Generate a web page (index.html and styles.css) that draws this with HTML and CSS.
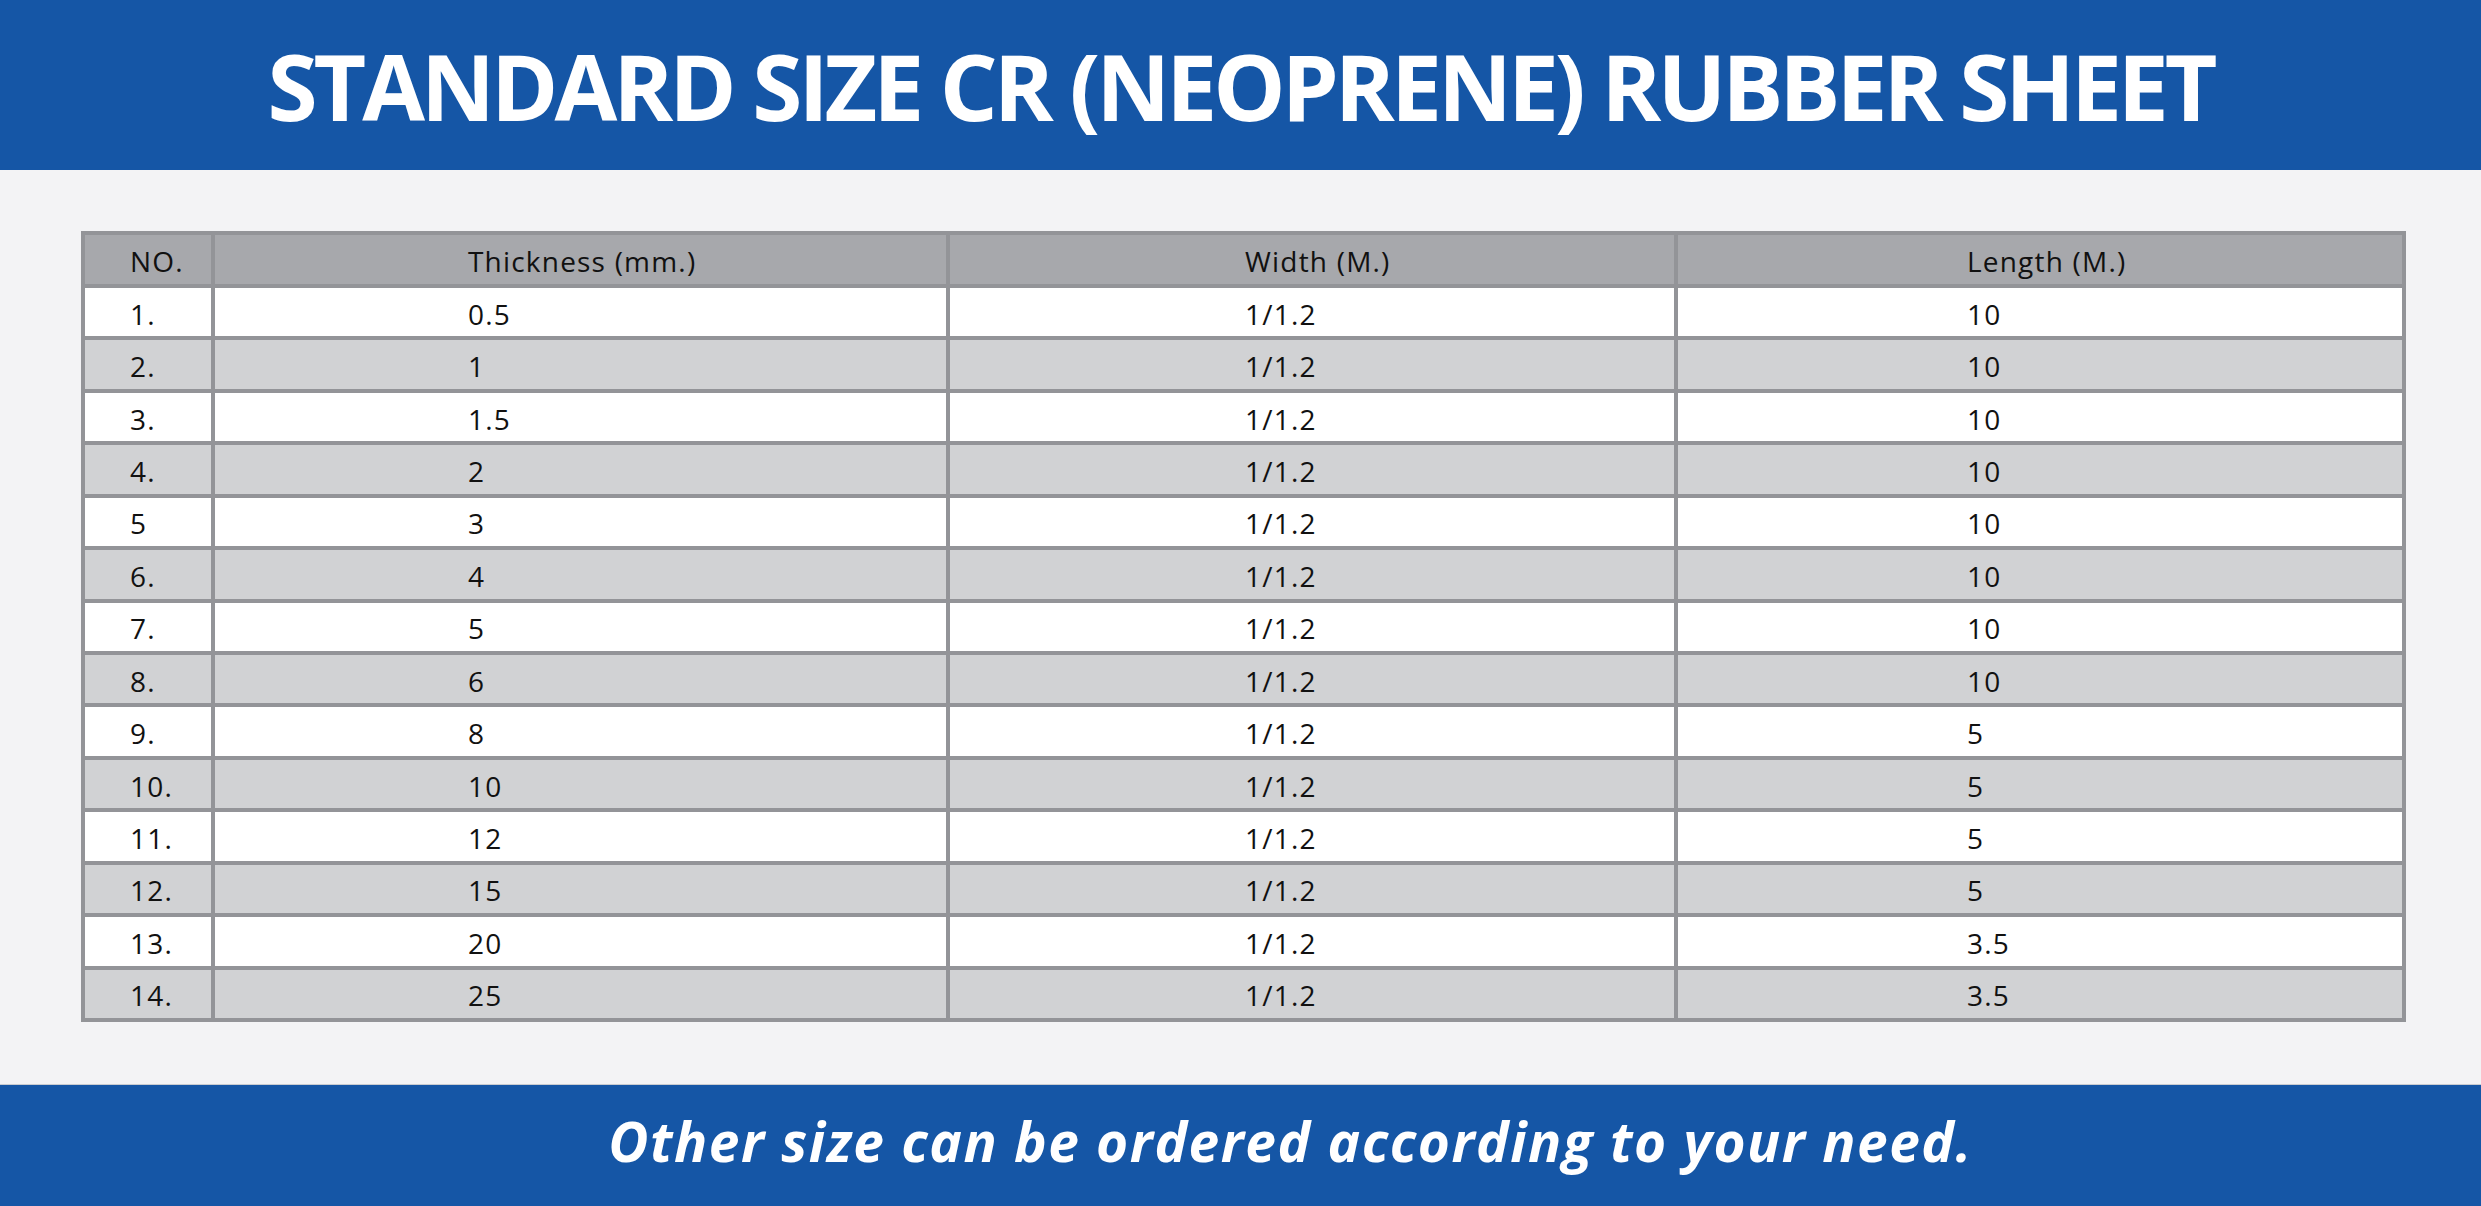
FILE: index.html
```html
<!DOCTYPE html>
<html lang="en">
<head>
<meta charset="utf-8">
<title>Standard Size CR (Neoprene) Rubber Sheet</title>
<link rel="stylesheet" href="styles.css">
</head>
<body>
<header class="banner">
  <h1 class="title">STANDARD SIZE CR (NEOPRENE) RUBBER SHEET</h1>
</header>
<main class="content">
  <div class="sheet" role="table">
    <div class="cell head c1" role="columnheader">NO.</div>
    <div class="cell head c2" role="columnheader">Thickness (mm.)</div>
    <div class="cell head c3" role="columnheader">Width (M.)</div>
    <div class="cell head c4" role="columnheader">Length (M.)</div>

    <div class="cell odd c1">1.</div><div class="cell odd c2">0.5</div><div class="cell odd c3">1/1.2</div><div class="cell odd c4">10</div>
    <div class="cell even c1">2.</div><div class="cell even c2">1</div><div class="cell even c3">1/1.2</div><div class="cell even c4">10</div>
    <div class="cell odd c1">3.</div><div class="cell odd c2">1.5</div><div class="cell odd c3">1/1.2</div><div class="cell odd c4">10</div>
    <div class="cell even c1">4.</div><div class="cell even c2">2</div><div class="cell even c3">1/1.2</div><div class="cell even c4">10</div>
    <div class="cell odd c1">5</div><div class="cell odd c2">3</div><div class="cell odd c3">1/1.2</div><div class="cell odd c4">10</div>
    <div class="cell even c1">6.</div><div class="cell even c2">4</div><div class="cell even c3">1/1.2</div><div class="cell even c4">10</div>
    <div class="cell odd c1">7.</div><div class="cell odd c2">5</div><div class="cell odd c3">1/1.2</div><div class="cell odd c4">10</div>
    <div class="cell even c1">8.</div><div class="cell even c2">6</div><div class="cell even c3">1/1.2</div><div class="cell even c4">10</div>
    <div class="cell odd c1">9.</div><div class="cell odd c2">8</div><div class="cell odd c3">1/1.2</div><div class="cell odd c4">5</div>
    <div class="cell even c1">10.</div><div class="cell even c2">10</div><div class="cell even c3">1/1.2</div><div class="cell even c4">5</div>
    <div class="cell odd c1">11.</div><div class="cell odd c2">12</div><div class="cell odd c3">1/1.2</div><div class="cell odd c4">5</div>
    <div class="cell even c1">12.</div><div class="cell even c2">15</div><div class="cell even c3">1/1.2</div><div class="cell even c4">5</div>
    <div class="cell odd c1">13.</div><div class="cell odd c2">20</div><div class="cell odd c3">1/1.2</div><div class="cell odd c4">3.5</div>
    <div class="cell even c1">14.</div><div class="cell even c2">25</div><div class="cell even c3">1/1.2</div><div class="cell even c4">3.5</div>
  </div>
</main>
<footer class="footer">
  <p class="note">Other size can be ordered according to your need.</p>
</footer>
</body>
</html>
```
FILE: styles.css
```css
html, body {
  margin: 0;
  padding: 0;
}
body {
  width: 2481px;
  height: 1206px;
  overflow: hidden;
  background: #f3f3f5;
  display: flex;
  flex-direction: column;
}
.banner {
  height: 170px;
  background: #1556a6;
  display: flex;
  align-items: center;
  justify-content: center;
}
.title {
  margin: 0;
  padding-top: 2px;
  font-family: "Open Sans", "Liberation Sans", sans-serif;
  font-weight: 700;
  font-size: 91px;
  line-height: 1;
  letter-spacing: -4px;
  color: #ffffff;
}
.content {
  height: 915px;
  padding: 61px 75px 0 81px;
  box-sizing: border-box;
  border-bottom: 1px solid #c9cbd0;
}
.sheet {
  display: grid;
  grid-template-columns: 126px 731px 724px 724px;
  grid-template-rows: 49px repeat(14, 1fr);
  gap: 4px;
  padding: 4px;
  height: 791px;
  box-sizing: border-box;
  background: #939498;
}
.cell {
  display: flex;
  align-items: center;
  padding-top: 3px;
  box-sizing: border-box;
  font-family: "Open Sans", "Liberation Sans", sans-serif;
  font-size: 28px;
  letter-spacing: 1.2px;
  color: #111111;
}
.head { background: #a7a8ac; }
.odd { background: #ffffff; }
.even { background: #d1d2d4; }
.c1 { padding-left: 45px; }
.c2 { padding-left: 253px; }
.c3 { padding-left: 295px; }
.c4 { padding-left: 289px; }
.footer {
  flex: 1;
  background: #1556a6;
  display: flex;
  align-items: center;
  justify-content: center;
  padding-left: 100px;
}
.note {
  margin: 0 0 10px 0;
  font-family: "Open Sans", "Liberation Sans", sans-serif;
  font-style: italic;
  font-weight: 700;
  font-size: 55px;
  line-height: 1;
  letter-spacing: 1.5px;
  color: #ffffff;
}
```
